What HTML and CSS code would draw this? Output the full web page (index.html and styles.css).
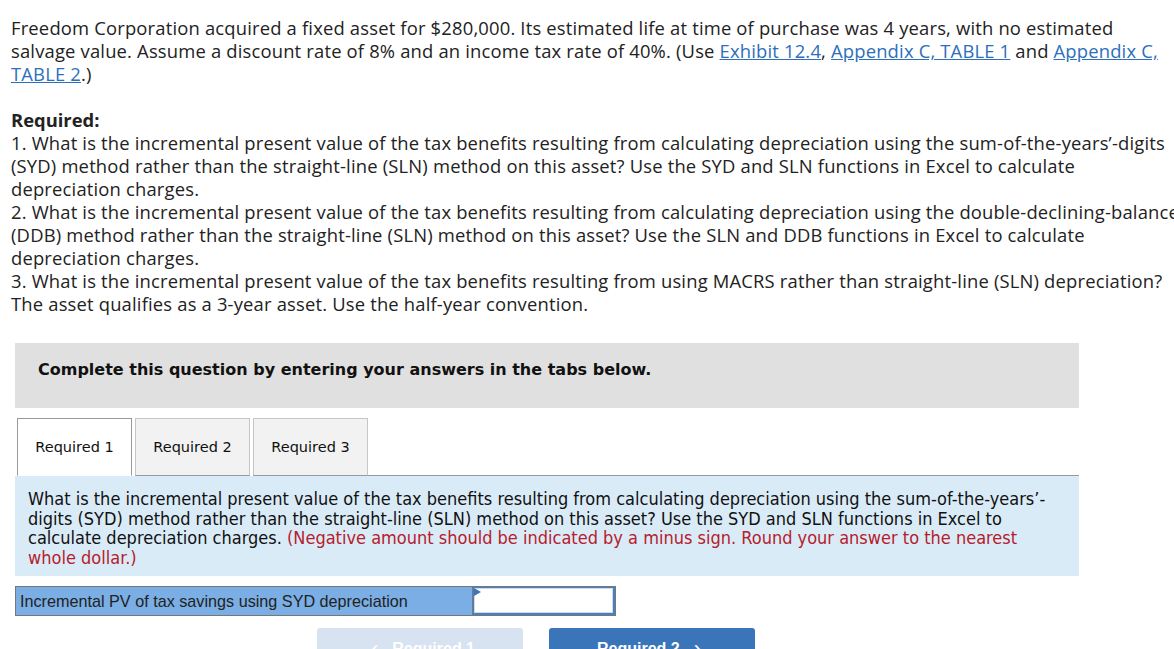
FILE: index.html
```html
<!DOCTYPE html>
<html>
<head>
<meta charset="utf-8">
<link rel="stylesheet" href="styles.css">
</head>
<body>
<div class="page">
  <p class="intro">Freedom Corporation acquired a fixed asset for $280,000. Its estimated life at time of purchase was 4 years, with no estimated salvage value. Assume a discount rate of 8% and an income tax rate of 40%. (Use <a href="#">Exhibit 12.4</a>, <a href="#">Appendix C, TABLE 1</a> and <a href="#">Appendix C, TABLE 2</a>.)</p>
  <p class="req"><b>Required:</b><br>
  1. What is the incremental present value of the tax benefits resulting from calculating depreciation using the sum-of-the-years’-digits (SYD) method rather than the straight-line (SLN) method on this asset? Use the SYD and SLN functions in Excel to calculate depreciation charges.<br>
  2. What is the incremental present value of the tax benefits resulting from calculating depreciation using the double-declining-balance (DDB) method rather than the straight-line (SLN) method on this asset? Use the SLN and DDB functions in Excel to calculate depreciation charges.<br>
  3. What is the incremental present value of the tax benefits resulting from using MACRS rather than straight-line (SLN) depreciation? The asset qualifies as a 3-year asset. Use the half-year convention.</p>

  <div class="complete">Complete this question by entering your answers in the tabs below.</div>

  <div class="tabs">
    <div class="tab active">Required 1</div>
    <div class="tab">Required 2</div>
    <div class="tab">Required 3</div>
    <div class="tabline"></div>
  </div>

  <div class="question">What is the incremental present value of the tax benefits resulting from calculating depreciation using the sum-of-the-years’-digits (SYD) method rather than the straight-line (SLN) method on this asset? Use the SYD and SLN functions in Excel to calculate depreciation charges. <span class="red">(Negative amount should be indicated by a minus sign. Round your answer to the nearest whole dollar.)</span></div>

  <div class="answer">
    <div class="label">Incremental PV of tax savings using SYD depreciation</div>
    <div class="input"><span class="flag"></span></div>
  </div>

  <div class="nav">
    <div class="btn prev"><span class="chev">&lsaquo;</span> Required 1</div>
    <div class="btn next">Required 2 <span class="chev">&rsaquo;</span></div>
  </div>
</div>
</body>
</html>
```
FILE: styles.css
```css
html, body { margin: 0; padding: 0; background: #fff; overflow: hidden; }
.page { padding: 16px 0 0 11px; width: 1200px; }
.intro, .req {
  margin: 0;
  font-family: "Open Sans", Lato, sans-serif;
  font-size: 18.4px;
  line-height: 23px;
  letter-spacing: 0.18px;
  color: #222;
}
.intro { width: 1168px; }
.intro a { color: #2c6fbb; text-decoration: underline; }
.req { margin-top: 23px; width: 1172px; }
.req b { font-weight: 700; letter-spacing: 0; }

.complete {
  margin: 28px 0 0 4px;
  width: 1064px;
  height: 65px;
  box-sizing: border-box;
  padding: 16px 23px 0;
  background: #e0e0e0;
  font-family: Tahoma, "DejaVu Sans", sans-serif;
  font-weight: bold;
  font-size: 16px;
  line-height: 22px;
  color: #111;
}

.tabs { display: flex; margin: 10px 0 0 4px; width: 1064px; align-items: flex-end; }
.tab {
  margin-left: 2px;
  width: 115px;
  height: 58px;
  box-sizing: border-box;
  border: 1px solid #c6c6c6;
  border-bottom: 1px solid #999;
  background: #f2f2f2;
  font-family: Tahoma, "DejaVu Sans", sans-serif;
  font-size: 14.5px;
  color: #111;
  display: flex;
  align-items: center;
  justify-content: center;
}
.tab + .tab { margin-left: 3px; }
.tab.active { background: #fff; border-color: #999; border-bottom-color: #fff; }
.tabline { flex: 1; height: 0; border-bottom: 1px solid #999; }

.question {
  margin-left: 4px;
  width: 1064px;
  box-sizing: border-box;
  padding: 13px 13px 9px 13px;
  background: #daebf8;
  font-family: "DejaVu Sans", sans-serif;
  font-stretch: condensed;
  font-size: 18px;
  line-height: 19.5px;
  color: #111;
}
.red { color: #b5202a; }

.answer {
  margin: 10px 0 0 4px;
  display: flex;
  width: 601px;
  height: 30px;
  box-sizing: border-box;
  border: 1px solid #777;
}
.label {
  width: 452px;
  background: #7aaee4;
  border-right: 1px solid #777;
  font-family: Arial, "Liberation Sans", sans-serif;
  font-size: 16.2px;
  color: #222;
  padding-left: 4px;
  display: flex;
  align-items: center;
}
.input {
  flex: 1;
  position: relative;
  background: #fff;
  border: 2px solid #4a80c0;
  border-left-width: 1px;
  border-top-width: 1px;
  box-shadow: inset 0 0 0 1px #c8dbef;
}
.flag {
  position: absolute;
  left: 0; top: 0;
  width: 0; height: 0;
  border-top: 4px solid transparent;
  border-bottom: 4px solid transparent;
  border-left: 7px solid #3a75b9;
}

.nav { display: flex; gap: 26px; margin: 12px 0 0 306px; }
.btn {
  width: 206px;
  height: 40px;
  border-radius: 3px;
  font-family: Arial, "Liberation Sans", sans-serif;
  font-weight: bold;
  font-size: 16px;
  display: flex;
  justify-content: center;
  align-items: center;
  gap: 8px;
  padding-top: 2px;
  box-sizing: border-box;
}
.prev { background: #d7e3f0; color: #fff; }
.next { background: #3a75b9; color: #fff; }
.chev { font-size: 22px; font-weight: normal; margin: 0 6px; }
```
